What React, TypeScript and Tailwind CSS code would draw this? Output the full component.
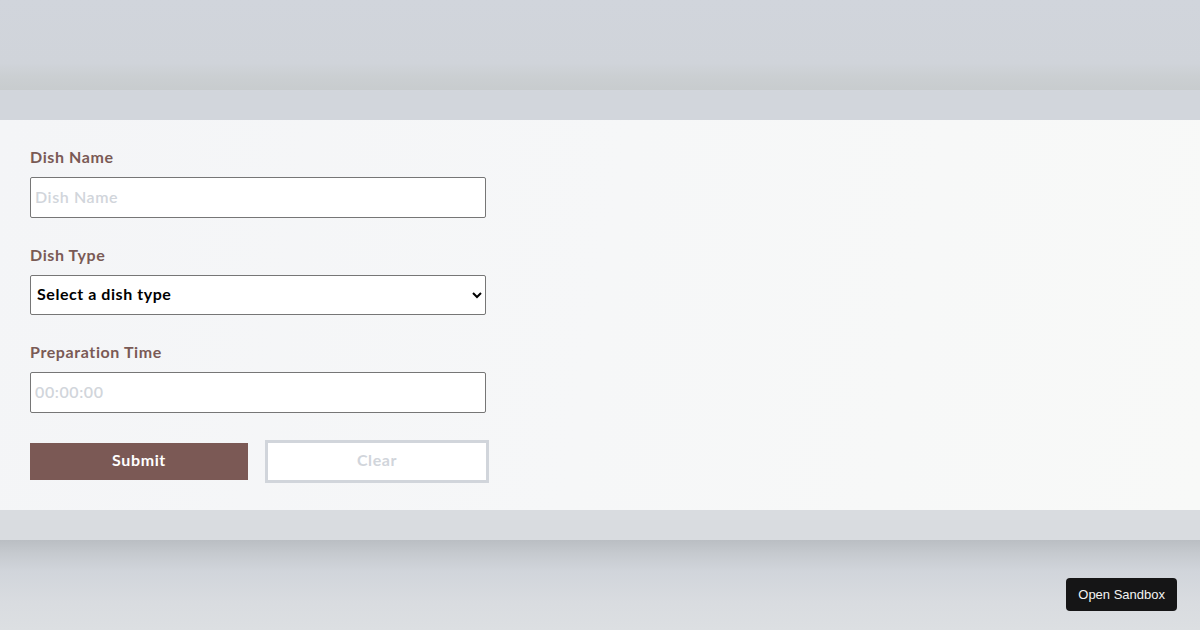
import { useState } from 'react';

const labelClass = 'block text-[16px] leading-[20px] font-bold tracking-[0.6px] text-[#7a5a55]';
const fieldClass =
  'mt-[10px] block h-[41px] w-[456px] rounded-[2px] border border-[#767676] bg-white px-1 pb-[3px] text-[16px] font-bold tracking-[0.6px] text-black placeholder:font-semibold placeholder:text-[#d1d5db] outline-none';

export default function App() {
  const [name, setName] = useState('');
  const [type, setType] = useState('');
  const [time, setTime] = useState('');

  return (
    <div
      className="flex h-[630px] w-full flex-col overflow-hidden bg-[#d1d5db]"
      style={{ fontFamily: 'Lato, "Noto Sans", sans-serif' }}
    >
      <div className="h-[90px] bg-[linear-gradient(to_bottom,#d1d5dc_0%,#d0d4da_70%,#cbcfd2_85%,#c8ccce_100%)]" />
      <div className="h-[30px] bg-[#d2d6dc]" />

      <form
        className="flex h-[390px] flex-col bg-[linear-gradient(100deg,#f4f5f7_0%,#f6f7f8_50%,#f8f9f8_100%)] px-[30px] pt-[27px]"
        onSubmit={(e) => e.preventDefault()}
      >
        <label className={labelClass}>Dish Name</label>
        <input
          className={fieldClass}
          placeholder="Dish Name"
          value={name}
          onChange={(e) => setName(e.target.value)}
        />

        <label className={`mt-[27px] ${labelClass}`}>Dish Type</label>
        <select
          className="mt-[10px] block h-[40px] w-[456px] rounded-[2px] border border-[#767676] bg-white pb-[3px] pl-[2px] pr-1 text-[16px] font-bold tracking-[0.55px] text-black outline-none"
          value={type}
          onChange={(e) => setType(e.target.value)}
        >
          <option value="">Select a dish type</option>
          <option value="pizza">Pizza</option>
          <option value="soup">Soup</option>
          <option value="sandwich">Sandwich</option>
        </select>

        <label className={`mt-[27px] ${labelClass}`}>Preparation Time</label>
        <input
          className={fieldClass}
          placeholder="00:00:00"
          value={time}
          onChange={(e) => setTime(e.target.value)}
        />

        <div className="mt-[27px] flex items-center gap-[17px]">
          <button
            type="submit"
            className="h-[37px] w-[218px] bg-[#7b5955] pb-[3px] text-[16px] font-bold tracking-[0.6px] text-white"
          >
            Submit
          </button>
          <button
            type="button"
            className="h-[43px] w-[224px] border-[3px] border-[#d1d5db] bg-white pb-[3px] text-[16px] font-bold tracking-[0.6px] text-[#d1d5db]"
            onClick={() => {
              setName('');
              setType('');
              setTime('');
            }}
          >
            Clear
          </button>
        </div>
      </form>

      <div className="h-[30px] bg-[#d9dce0]" />
      <div className="relative flex-1 bg-[linear-gradient(to_bottom,#babec3_0%,#c6cacf_15%,#d1d5db_35%,#d9dce0_70%,#dcdfe2_100%)]">
        <button
          className="absolute right-[23px] top-[38px] h-[33px] rounded-[4px] bg-[#151516] px-[12px] text-[13px] text-[#f3f3f3]"
          style={{ fontFamily: '"Liberation Sans", Arial, sans-serif' }}
        >
          Open Sandbox
        </button>
      </div>
    </div>
  );
}
